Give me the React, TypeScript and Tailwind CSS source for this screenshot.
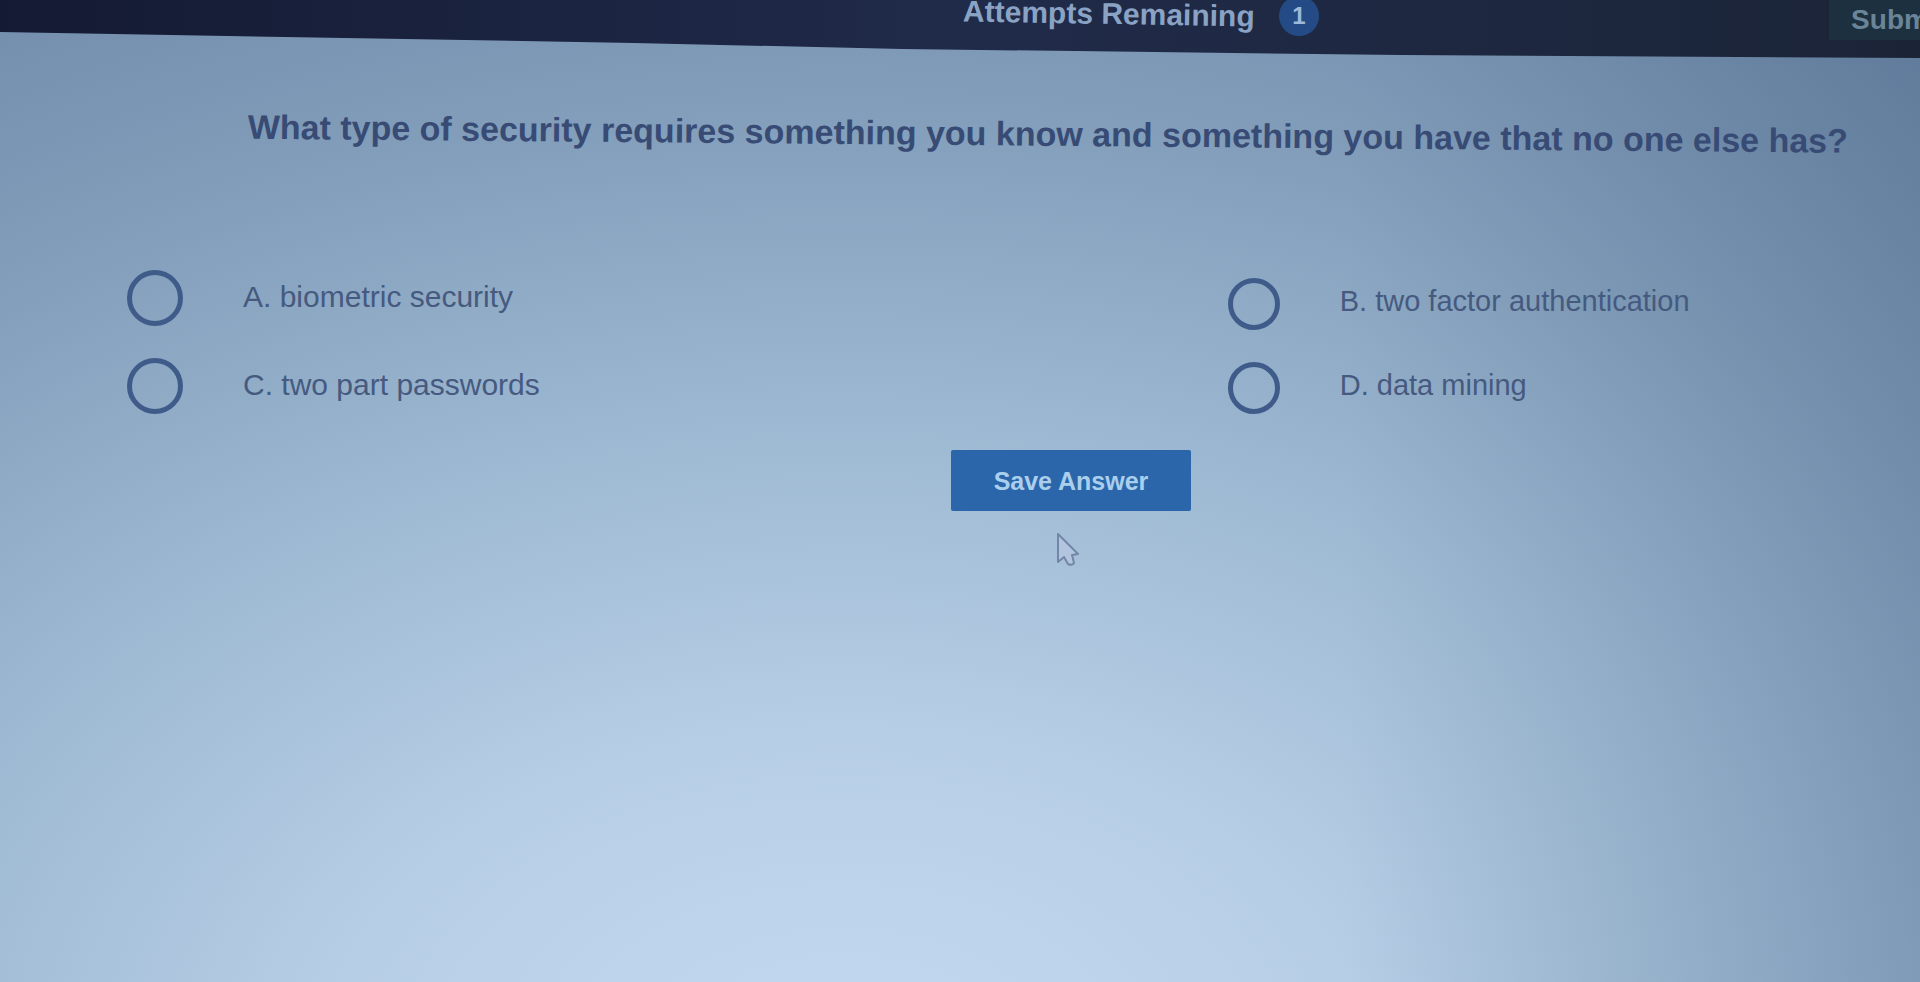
import { useState } from "react";

type Option = { id: string; label: string };

const leftOptions: Option[] = [
  { id: "a", label: "A. biometric security" },
  { id: "c", label: "C. two part passwords" },
];

const rightOptions: Option[] = [
  { id: "b", label: "B. two factor authentication" },
  { id: "d", label: "D. data mining" },
];

export default function App() {
  const [answer, setAnswer] = useState("");

  const renderOption = (option: Option, rowClass: string, radioClass: string) => (
    <div key={option.id} className={rowClass}>
      <input
        type="radio"
        id={option.id}
        name="answer"
        checked={answer === option.id}
        onChange={() => setAnswer(option.id)}
        className={radioClass}
      />
      <label htmlFor={option.id} className="pb-1">
        {option.label}
      </label>
    </div>
  );

  return (
    <div className="min-h-screen overflow-hidden bg-[linear-gradient(to_right,transparent_70%,rgba(40,70,105,0.22)),radial-gradient(ellipse_95%_125%_at_44%_110%,#c3d9f1,#b7cfe6_28%,#9db8d2_54%,#839fbb_78%,#6f88a8_105%)] font-['Liberation_Sans',Arial,sans-serif]">
      <header className="grid h-[58px] grid-cols-[1fr_auto_1fr] items-start bg-linear-to-r from-[#141a33] via-[#202b4a] to-[#1b2437] [clip-path:polygon(0_0,100%_0,100%_100%,73%_55px,47%_49px,33%_43px,0_32px)]">
        <div />
        <div className="flex items-start gap-6 pl-[362px]">
          <span className="-mt-0.5 rotate-1 text-[30px] leading-8 font-bold text-[#8aa3c4]">Attempts Remaining</span>
          <span className="-mt-1 flex size-10 items-center justify-center rounded-full bg-[#244b86] text-[24px] font-bold text-[#9db9da]">
            1
          </span>
        </div>
        <div className="flex justify-end overflow-hidden">
          <button className="-mr-12 h-10 bg-[#1d303f] px-[22px] text-[28px] leading-9 font-bold text-[#6b8598]">
            Submit
          </button>
        </div>
      </header>

      <main>
        <h1 className="rotate-[0.5deg] pt-[55px] pl-[248px] text-[34px] leading-10 font-bold whitespace-nowrap text-[#374b74]">
          What type of security requires something you know and something you have that no one else has?
        </h1>

        <form onSubmit={(e) => e.preventDefault()}>
          <fieldset
            aria-label="Answer choices"
            className="grid grid-cols-[159fr_100fr] pt-[117px] pl-[127px] text-[#465a80]"
          >
            <div className="flex flex-col gap-8">
              {leftOptions.map((o) =>
                renderOption(
                  o,
                  "flex h-14 items-center gap-15 text-[30px]",
                  "size-14 appearance-none rounded-full border-5 border-[#3f5b8a] checked:bg-[#2a66ad]",
                ),
              )}
            </div>
            <div className="flex flex-col gap-8 pt-2">
              {rightOptions.map((o) =>
                renderOption(
                  o,
                  "flex h-13 items-center gap-15 text-[29px]",
                  "size-13 appearance-none rounded-full border-5 border-[#3f5b8a] checked:bg-[#2a66ad]",
                ),
              )}
            </div>
          </fieldset>

          <div className="flex justify-center pt-9 pl-[222px]">
            <div className="relative">
              <button
                type="submit"
                className="h-[61px] w-60 rounded-xs bg-[#2b66ab] pt-0.5 text-[25px] font-bold text-[#a9cfec]"
              >
                Save Answer
              </button>
              <svg
                className="absolute top-[82px] left-[105px] h-[35px] w-6"
                viewBox="0 0 24 35"
                fill="#b3c5de"
                stroke="#7287a8"
                strokeWidth="2"
                strokeLinejoin="round"
                aria-hidden="true"
              >
                <path d="M2 2 L2 30 L8 25 L12 32 Q16 34 18 31 L16 23 L22 22 Z" />
              </svg>
            </div>
          </div>
        </form>
      </main>
    </div>
  );
}
